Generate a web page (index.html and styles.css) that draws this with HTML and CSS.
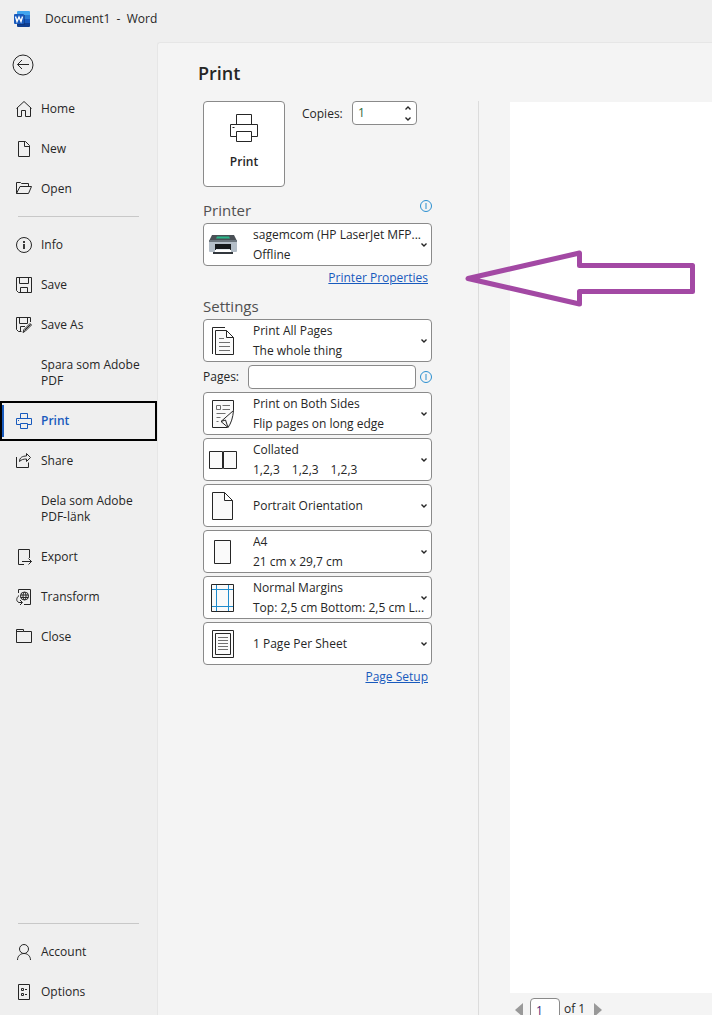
FILE: index.html
```html
<!DOCTYPE html>
<html lang="en">
<head>
<meta charset="UTF-8">
<meta name="viewport" content="width=device-width, initial-scale=1.0">
<title>Document1 - Word</title>
<link rel="stylesheet" href="styles.css">
</head>
<body>

<!-- Title bar -->
<header class="titlebar">
    <svg class="logo" width="16" height="16" viewBox="0 0 16 16" aria-hidden="true">
        <path d="M4 0h11a1 1 0 0 1 1 1v3H3V1a1 1 0 0 1 1-1z" fill="#41a5ee"/>
        <path d="M3 4h13v4H3z" fill="#2b7cd3"/>
        <path d="M3 8h13v4H3z" fill="#185abd"/>
        <path d="M3 12h13v3a1 1 0 0 1-1 1H4a1 1 0 0 1-1-1z" fill="#103f91"/>
        <path d="M3 4h8v10H3z" fill="#0b2f6e" opacity=".5"/>
        <rect x="0" y="3" width="10" height="10" rx="1" fill="#185abd"/>
        <path d="M1.500 5.500l1.500 5L5 6l2 4.500L8.500 5.500" fill="none" stroke="#fff" stroke-width="1.400"/>
    </svg>
    <span>Document1&nbsp; -&nbsp; Word</span>
</header>

<div class="backstage">

    <!-- Left navigation -->
    <nav class="sidebar">
        <button class="back" aria-label="Back">
            <svg width="22" height="22" viewBox="0 0 22 22" class="icon"><circle cx="11" cy="11" r="10"/><path d="M5.500 10.500H17M10 6L5.500 10.500 10 15"/></svg>
        </button>

        <a href="#" class="item">
            <svg class="icon" width="16" height="16" viewBox="0 0 16 16"><path d="M.5 7.500L8 .5l7.500 7M1.500 6.500v9h4v-6h4v6h5v-9"/></svg>
            <span>Home</span>
        </a>
        <a href="#" class="item">
            <svg class="icon" width="16" height="16" viewBox="0 0 16 16"><path d="M2.500.5h7l4 4v11h-11zM8.500.5v5h5"/></svg>
            <span>New</span>
        </a>
        <a href="#" class="item">
            <svg class="icon" width="16" height="16" viewBox="0 0 16 16"><path d="M.5 12.500v-11h4l1 1h7v3M.5 12.500l3.500-7h11.500l-3 7z"/></svg>
            <span>Open</span>
        </a>

        <hr class="divider">

        <a href="#" class="item">
            <svg class="icon" width="16" height="16" viewBox="0 0 16 16"><circle cx="8" cy="8" r="7.500"/><path d="M8 4v2M8 7v5" stroke-width="1.800"/></svg>
            <span>Info</span>
        </a>
        <a href="#" class="item">
            <svg class="icon" width="16" height="16" viewBox="0 0 16 16"><path d="M.5.5h15v15H2.500l-2-2zM3.500.5v6h9v-6M4.500 15.500v-5h7v5"/></svg>
            <span>Save</span>
        </a>
        <a href="#" class="item">
            <svg class="icon" width="16" height="16" viewBox="0 0 16 16"><path d="M14.500 5V.5H.5v12l2 2h3M3.500.5v6h8v-6M4.500 14.500v-5H9M7 15.500l1-3 6-6 1.500 1.500-6 6zM8.500 13.500l6-6"/></svg>
            <span>Save As</span>
        </a>
        <a href="#" class="item no-icon"><span>Spara som Adobe PDF</span></a>
        <a href="#" class="item active" aria-current="page">
            <svg class="icon" width="16" height="16" viewBox="0 0 16 16"><path d="M4.500 5.500v-5h7v5M4.500 11.500h-4v-6h15v6h-4M4.500 10.500h7v5h-7zM2 7.500h1"/></svg>
            <span>Print</span>
        </a>
        <a href="#" class="item">
            <svg class="icon" width="16" height="16" viewBox="0 0 16 16"><path d="M.5 4v10.500h12v-5M3.500 8.500c0-4 3-5.500 7-5.500V.5l4 4-4 4V6c-3 0-5 .5-7 2.500z"/></svg>
            <span>Share</span>
        </a>
        <a href="#" class="item no-icon"><span>Dela som Adobe PDF-länk</span></a>
        <a href="#" class="item">
            <svg class="icon" width="16" height="16" viewBox="0 0 16 16"><path d="M8 15.500H2.500V.5h11V9M6 12.500h9.500M12.500 9.500l3 3-3 3"/></svg>
            <span>Export</span>
        </a>
        <a href="#" class="item">
            <svg class="icon" width="16" height="16" viewBox="0 0 16 16"><path d="M2.500 4V.5h12v15H8"/><circle cx="8.500" cy="7" r="4"/><path d="M4.500 6h8M4.500 8.500h8M8.500 3c-2 2-2 6 0 8M8.500 3c2 2 2 6 0 8M3 6.500C0 9 0 12.500 3 13.500h3M4 11l2.500 2.500L4 16"/></svg>
            <span>Transform</span>
        </a>
        <a href="#" class="item">
            <svg class="icon" width="16" height="16" viewBox="0 0 16 16"><path d="M.5.5h7v2h8v11H.5zM.5 2.500h7"/></svg>
            <span>Close</span>
        </a>

        <div class="sidebar-bottom">
            <hr class="divider">
            <a href="#" class="item">
                <svg class="icon" width="16" height="16" viewBox="0 0 16 16"><circle cx="8" cy="5" r="4.500"/><path d="M1.500 16c0-4 3-6.500 6.500-6.500s6.500 2.500 6.500 6.500"/></svg>
                <span>Account</span>
            </a>
            <a href="#" class="item">
                <svg class="icon" width="16" height="16" viewBox="0 0 16 16"><path d="M2.500.5h11v15h-11zM5.500 4.500h2v2h-2zM5.500 9.500h2v2h-2zM9 5.500h2M9 10.500h2"/></svg>
                <span>Options</span>
            </a>
        </div>
    </nav>

    <!-- Print page -->
    <main class="page">
        <h1>Print</h1>

        <div class="columns">
            <form class="settings">
                <div class="top-row">
                    <button type="button" class="print-button">
                        <svg class="icon" width="28" height="28" viewBox="0 0 28 28"><path d="M6.500 10.500V.5h15v10"/><path d="M6.500 22.500h-6v-12h27v12h-6"/><path d="M6.500 17.500h15v10h-15zM2.500 13.500h2" /></svg>
                        <span>Print</span>
                    </button>
                    <label for="copies">Copies:</label>
                    <div class="spinner">
                        <input type="text" id="copies" value="1">
                        <div class="arrows">
                            <button type="button" aria-label="More copies"><svg class="icon chevron" width="6" height="4" viewBox="0 0 6 4"><path d="M.5 3.500L3 1l2.500 2.500"/></svg></button>
                            <button type="button" aria-label="Fewer copies"><svg class="icon chevron" width="6" height="4" viewBox="0 0 6 4"><path d="M.5.5L3 3 5.500.5"/></svg></button>
                        </div>
                    </div>
                </div>

                <div class="heading">
                    <h2>Printer</h2>
                    <svg class="info" width="12" height="12" viewBox="0 0 12 12"><circle cx="6" cy="6" r="5.500"/><path d="M6 3v6"/></svg>
                </div>
                <div class="dropdown">
                    <svg width="28" height="20" viewBox="0 0 28 20" aria-hidden="true">
                        <path d="M3 0h22l3 6H0z" fill="#4a5056"/>
                        <path d="M8 1.500h12l1 2H7z" fill="#29b98a"/>
                        <path d="M0 5h28v11a1 1 0 0 1-1 1H1a1 1 0 0 1-1-1z" fill="#b4bec8"/>
                        <path d="M0 5h28v2H0z" fill="#6c757d"/>
                        <path d="M6 9h16v6H6z" fill="#15181b"/>
                        <path d="M7 14h14l1 4H6z" fill="#e4e9ee"/>
                        <path d="M4 17h20v2H4z" fill="#33383d"/>
                        <path d="M6 15h16v2H6z" fill="#fff"/>
                    </svg>
                    <div class="text">
                        <select aria-label="Printer"><option>sagemcom (HP LaserJet MFP...</option></select>
                        <span>Offline</span>
                    </div>
                    <svg class="icon chevron" width="6" height="4" viewBox="0 0 6 4"><path d="M.5.5L3 3 5.500.5"/></svg>
                </div>
                <a href="#" class="link">Printer Properties</a>

                <div class="heading">
                    <h2>Settings</h2>
                </div>
                <div class="dropdown">
                    <svg class="icon" width="28" height="28" viewBox="0 0 28 28"><path d="M3.500 27V.5H16"/><path class="sheet" d="M6.500 3.500h11l7 7v17h-18zM17.500 3.500v7h7"/><path class="lines" d="M10 11.500h5M10 15.500h11M10 19.500h11M10 23.500h11"/></svg>
                    <div class="text">
                        <select aria-label="Print range"><option>Print All Pages</option></select>
                        <span>The whole thing</span>
                    </div>
                    <svg class="icon chevron" width="6" height="4" viewBox="0 0 6 4"><path d="M.5.5L3 3 5.500.5"/></svg>
                </div>
                <div class="pages-row">
                    <label for="pages">Pages:</label>
                    <input type="text" id="pages">
                    <svg class="info" width="12" height="12" viewBox="0 0 12 12"><circle cx="6" cy="6" r="5.500"/><path d="M6 3v6"/></svg>
                </div>
                <div class="dropdown">
                    <svg class="icon" width="28" height="28" viewBox="0 0 28 28"><path class="sheet" d="M18 27.500H3.500V.5h21v10"/><path class="lines" d="M7.500 5.500h4v4h-4zM13.500 5.500H21M13.500 9.500H21M7.500 13.500h9M7.500 17.500h4M7.500 21.500h2"/><path class="sheet" d="M24.500 10.500L12 21.500l7 6c3-4 5-10 5.500-17zM12 21.500l4.500-1.500 2.500 7.500"/></svg>
                    <div class="text">
                        <select aria-label="Sides"><option>Print on Both Sides</option></select>
                        <span>Flip pages on long edge</span>
                    </div>
                    <svg class="icon chevron" width="6" height="4" viewBox="0 0 6 4"><path d="M.5.5L3 3 5.500.5"/></svg>
                </div>
                <div class="dropdown">
                    <svg class="icon" width="28" height="28" viewBox="0 0 28 28"><path class="sheet" d="M.5 5.500h13v17H.5zM14.500 5.500h13v17h-13z"/></svg>
                    <div class="text">
                        <select aria-label="Collation"><option>Collated</option></select>
                        <span class="copies-order"><span>1,2,3</span><span>1,2,3</span><span>1,2,3</span></span>
                    </div>
                    <svg class="icon chevron" width="6" height="4" viewBox="0 0 6 4"><path d="M.5.5L3 3 5.500.5"/></svg>
                </div>
                <div class="dropdown">
                    <svg class="icon" width="28" height="28" viewBox="0 0 28 28"><path class="sheet" d="M3.500.5h12l8 8v19h-20zM15.500.5v8h8"/></svg>
                    <div class="text">
                        <select aria-label="Orientation"><option>Portrait Orientation</option></select>
                    </div>
                    <svg class="icon chevron" width="6" height="4" viewBox="0 0 6 4"><path d="M.5.5L3 3 5.500.5"/></svg>
                </div>
                <div class="dropdown">
                    <svg class="icon" width="28" height="28" viewBox="0 0 28 28"><path class="sheet" d="M5.500 2.500h16v23h-16z"/></svg>
                    <div class="text">
                        <select aria-label="Paper size"><option>A4</option></select>
                        <span>21 cm x 29,7 cm</span>
                    </div>
                    <svg class="icon chevron" width="6" height="4" viewBox="0 0 6 4"><path d="M.5.5L3 3 5.500.5"/></svg>
                </div>
                <div class="dropdown">
                    <svg class="icon" width="28" height="28" viewBox="0 0 28 28"><path class="sheet" d="M2.500.5h22v27h-22z"/><path class="guides" d="M7.500 1v26M19.500 1v26M3 5.500h21M3 22.500h21"/></svg>
                    <div class="text">
                        <select aria-label="Margins"><option>Normal Margins</option></select>
                        <span>Top: 2,5 cm Bottom: 2,5 cm L...</span>
                    </div>
                    <svg class="icon chevron" width="6" height="4" viewBox="0 0 6 4"><path d="M.5.5L3 3 5.500.5"/></svg>
                </div>
                <div class="dropdown">
                    <svg class="icon" width="28" height="28" viewBox="0 0 28 28"><path class="sheet" d="M3.500.5h21v27h-21zM6.500 3.500h15v21h-15z"/><path class="lines" d="M9 7.500h10M9 10.500h10M9 13.500h10M9 16.500h10M9 19.500h10"/></svg>
                    <div class="text">
                        <select aria-label="Pages per sheet"><option>1 Page Per Sheet</option></select>
                    </div>
                    <svg class="icon chevron" width="6" height="4" viewBox="0 0 6 4"><path d="M.5.5L3 3 5.500.5"/></svg>
                </div>
                <a href="#" class="link">Page Setup</a>
            </form>

            <!-- Preview -->
            <section class="preview">
                <div class="paper"></div>
                <div class="pager">
                    <button type="button" aria-label="Previous page"><svg width="8" height="14" viewBox="0 0 8 14"><path d="M8 0v14L0 7z" fill="#999"/></svg></button>
                    <input type="text" id="pageNumber" value="1" aria-label="Page number">
                    <label for="pageNumber">of 1</label>
                    <button type="button" aria-label="Next page"><svg width="8" height="14" viewBox="0 0 8 14"><path d="M0 0v14l8-7z" fill="#999"/></svg></button>
                </div>
            </section>
        </div>

        <!-- Arrow pointing at Printer Properties -->
        <svg class="arrow" width="232" height="58" viewBox="0 0 232 58" aria-hidden="true">
            <path d="M3 29.500L114.500 4v12.500h113v26h-113V55z"/>
        </svg>
    </main>
</div>

</body>
</html>
```
FILE: styles.css
```css
* {
    box-sizing: border-box;
}

body {
    margin: 0;
    height: 100vh;
    display: flex;
    flex-direction: column;
    overflow: hidden;
    background-color: #efefef;
    color: #262626;
    font-family: "Open Sans", "Noto Sans", sans-serif;
    font-size: 12px;
    line-height: 16px;
}

button, input, select {
    font: inherit;
    color: inherit;
    margin: 0;
    padding: 0;
}

button {
    border: none;
    background: transparent;
    cursor: pointer;
}

svg {
    flex: none;
    display: block;
}

.icon {
    fill: none;
    stroke: currentColor;
}

.sheet {
    fill: #fafafa;
}

.lines {
    stroke: #707070;
}

.guides {
    stroke: #1e8bcd;
}

/* Title bar */
.titlebar {
    display: flex;
    align-items: center;
    gap: 15px;
    height: 42px;
    padding: 0 14px 4px;
}

.backstage {
    flex: 1;
    display: flex;
    min-height: 0;
}

/* Left navigation */
.sidebar {
    width: 157px;
    flex: none;
    display: flex;
    flex-direction: column;
}

.back {
    width: 22px;
    height: 22px;
    margin: 12px 0 13px 12px;
}

.item {
    display: flex;
    align-items: center;
    gap: 9px;
    padding: 12px 16px;
    color: inherit;
    text-decoration: none;
}

.no-icon {
    padding: 12px 16px 12px 41px;
}

.active {
    padding: 10px 14px;
    border: 2px solid #000;
    background: linear-gradient(#185abd, #185abd) no-repeat left center / 2px 32px;
    color: #185abd;
    font-weight: 600;
}

.divider {
    width: 121px;
    height: 1px;
    margin: 7px 0 8px 18px;
    border: none;
    background-color: #c8c8c8;
}

.sidebar-bottom {
    margin-top: auto;
    padding-bottom: 3px;
}

/* Print page */
.page {
    position: relative;
    flex: 1;
    min-width: 0;
    display: flex;
    flex-direction: column;
    background-color: #f4f4f4;
    border-top: 1px solid #e6e6e6;
    border-left: 1px solid #e6e6e6;
    border-top-left-radius: 3px;
}

h1 {
    margin: 18px 0 16px 40px;
    font-size: 18px;
    font-weight: 600;
    line-height: 24px;
}

.columns {
    flex: 1;
    display: flex;
    min-height: 0;
}

.settings {
    width: 321px;
    flex: none;
    display: flex;
    flex-direction: column;
    gap: 3px;
    padding: 0 46px 0 45px;
    border-right: 1px solid #dcdcdc;
}

.top-row {
    display: flex;
    align-items: flex-start;
    margin-bottom: 8px;
}

.top-row label {
    margin: 5px 0 0 17px;
    width: 50px;
}

.print-button {
    width: 82px;
    height: 86px;
    display: flex;
    flex-direction: column;
    align-items: center;
    gap: 12px;
    padding-bottom: 4px;
    border: 1px solid #8a8a8a;
    border-radius: 4px;
    background-color: #fff;
    font-weight: 600;
    justify-content: center;
}

.spinner {
    width: 65px;
    height: 24px;
    display: flex;
    border: 1px solid #8a8a8a;
    border-radius: 4px;
    background-color: #fff;
}

.spinner input {
    flex: 1;
    min-width: 0;
    padding-left: 5px;
    border: none;
    background: transparent;
    color: #2f6b3a;
}

.arrows {
    width: 11px;
    display: flex;
    flex-direction: column;
    justify-content: space-around;
}

.chevron {
    stroke-width: 1.4;
}

.heading {
    display: flex;
    justify-content: space-between;
    align-items: center;
    height: 22px;
}

.heading h2 {
    margin: 0;
    align-self: flex-end;
    color: #505050;
    font-size: 15px;
    font-weight: 500;
    line-height: 20px;
}

.heading .info {
    margin-bottom: 6px;
}

.info {
    fill: none;
    stroke: #2b8fd0;
}

.dropdown {
    display: flex;
    align-items: center;
    gap: 16px;
    height: 43px;
    padding: 0 4px 0 5px;
    border: 1px solid #8a8a8a;
    border-radius: 4px;
    background-color: #fff;
}

.text {
    flex: 1;
    min-width: 0;
    display: flex;
    flex-direction: column;
    line-height: 20px;
    white-space: nowrap;
}

.text select {
    appearance: none;
    border: none;
    background: transparent;
    width: 100%;
    height: 20px;
    line-height: 20px;
}

.dropdown .chevron {
    margin-left: -16px;
}

.copies-order {
    display: flex;
    gap: 12px;
}

.link {
    align-self: flex-end;
    margin: 1px 4px 5px 0;
    color: #185abd;
    text-decoration: underline;
}

.pages-row {
    display: flex;
    align-items: center;
    height: 24px;
    gap: 4px;
}

.pages-row label {
    width: 41px;
}

.pages-row input {
    flex: 1;
    min-width: 0;
    height: 24px;
    padding: 0 6px;
    border: 1px solid #8a8a8a;
    border-radius: 4px;
    background-color: #fff;
}

/* Preview */
.preview {
    flex: 1;
    display: flex;
    flex-direction: column;
    padding: 1px 0 0 31px;
}

.paper {
    flex: 1;
    background-color: #fff;
}

.pager {
    display: flex;
    align-items: flex-start;
    height: 22px;
    padding: 5px 5px 0;
    gap: 4px;
}

.pager button {
    height: 24px;
    padding: 0 1px 0 0;
}

.pager input {
    width: 30px;
    height: 24px;
    margin-left: 2px;
    padding-left: 5px;
    border: 1px solid #8a8a8a;
    border-radius: 4px;
    background-color: #fff;
    color: #4a2a7a;
}

.pager label {
    margin: 4px 5px 0 0;
    line-height: 14px;
}

/* Arrow over the preview */
.arrow {
    position: absolute;
    top: 206px;
    left: 307px;
}

.arrow path {
    fill: none;
    stroke: #a349a4;
    stroke-width: 5;
    stroke-linejoin: round;
}
```
